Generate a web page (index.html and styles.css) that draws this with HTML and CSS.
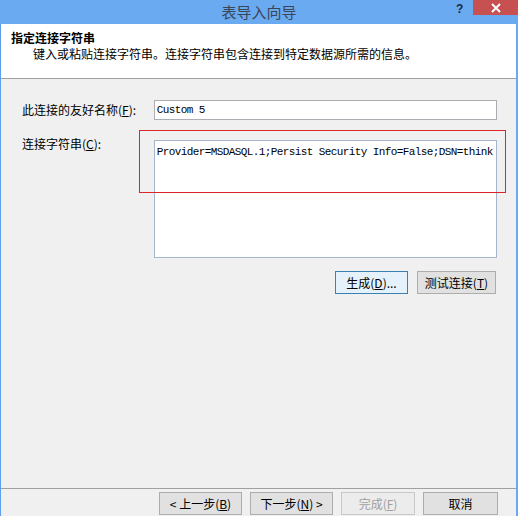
FILE: index.html
```html
<!DOCTYPE html>
<html lang="zh-CN">
<head>
<meta charset="utf-8">
<title>表导入向导</title>
<link rel="stylesheet" href="styles.css">
</head>
<body>
<div class="window">
  <div class="titlebar">
    <span class="title">表导入向导</span>
    <span class="help">?</span>
    <span class="close">
      <svg width="12" height="10" viewBox="0 0 12 10"><path d="M2 1 L10 9 M10 1 L2 9" stroke="#fff" stroke-width="2" fill="none"/></svg>
    </span>
  </div>
  <div class="header">
    <div class="h-title">指定连接字符串</div>
    <div class="h-sub">键入或粘贴连接字符串。连接字符串包含连接到特定数据源所需的信息。</div>
  </div>
  <div class="content">
    <div class="row">
      <div class="label">此连接的友好名称(<u>F</u>):</div>
      <div class="field input mono">Custom 5</div>
    </div>
    <div class="row row2">
      <div class="label">连接字符串(<u>C</u>):</div>
      <div class="field area mono">Provider=MSDASQL.1;Persist Security Info=False;DSN=think</div>
    </div>
    <div class="actions">
      <div class="btn focus">生成(<u>D</u>)...</div>
      <div class="btn wide">测试连接(<u>T</u>)</div>
    </div>
    <div class="highlight"></div>
  </div>
  <div class="footer">
    <div class="btn nav">&lt; 上一步(<u>B</u>)</div>
    <div class="btn nav">下一步(<u>N</u>) &gt;</div>
    <div class="btn small disabled">完成(<u>F</u>)</div>
    <div class="btn cancel">取消</div>
  </div>
</div>
</body>
</html>
```
FILE: styles.css
```css
* { box-sizing: border-box; }
html, body { margin: 0; padding: 0; }
body {
  width: 518px;
  height: 516px;
  overflow: hidden;
  font-family: "Noto Sans CJK SC", "Liberation Sans", sans-serif;
  font-size: 12px;
  color: #000;
  background: #f0f0f0;
}
.window {
  width: 518px;
  height: 516px;
  display: flex;
  flex-direction: column;
  border-left: 1px solid #5f9fe9;
  border-right: 2px solid #6aaaf0;
  position: relative;
}
.titlebar {
  height: 24px;
  background: #6aaaf0;
  position: relative;
  display: flex;
  justify-content: center;
  align-items: center;
  margin-left: -1px;
  margin-right: -2px;
}
.title {
  font-size: 15px;
  color: #3a4656;
  line-height: 24px;
}
.help {
  position: absolute;
  left: 456px;
  top: 1px;
  font-family: "Liberation Sans", sans-serif;
  font-weight: bold;
  font-size: 12px;
  color: #1d2a3a;
  line-height: 16px;
}
.close {
  position: absolute;
  right: 0;
  top: 0;
  width: 45px;
  height: 15px;
  background: #c75050;
  display: flex;
  justify-content: center;
  align-items: center;
}
.header {
  height: 55px;
  background: #fff;
  border-bottom: 1px solid #a0a0a0;
  padding: 6px 0 0 10px;
}
.h-title {
  font-weight: bold;
  line-height: 15px;
}
.h-sub {
  line-height: 15px;
  padding-left: 22px;
  margin-top: 1px;
}
.content {
  flex: 1;
  position: relative;
  padding: 21px 19px 0 21px;
  display: flex;
  flex-direction: column;
}
.row {
  display: flex;
  align-items: flex-start;
}
.row2 { margin-top: 20px; }
.label {
  width: 132px;
  line-height: 20px;
}
.row2 .label {
  line-height: 16px;
  margin-top: -4px;
}
.field {
  width: 344px;
  background: #fff;
}
.input {
  height: 20px;
  border: 1px solid #abadb3;
  padding: 0 2px;
  line-height: 18px;
}
.area {
  height: 118px;
  border: 1px solid #a4b7cc;
  padding: 4px 2px;
  line-height: 14px;
}
.mono {
  font-family: "Liberation Mono", monospace;
  font-size: 11px;
  letter-spacing: -0.6px;
  white-space: nowrap;
}
.actions {
  display: flex;
  justify-content: flex-end;
  gap: 9px;
  margin-top: 13px;
  padding-right: 1px;
}
.btn {
  height: 23px;
  border: 1px solid #adadad;
  background: #e1e1e1;
  display: flex;
  justify-content: center;
  align-items: center;
  line-height: 16px;
  white-space: nowrap;
}
.btn.focus {
  width: 73px;
  border-color: #3c7fb1;
  background: #e5f1fb;
}
.btn.wide { width: 79px; }
.highlight {
  position: absolute;
  left: 138px;
  top: 51px;
  width: 367px;
  height: 63px;
  border: 1px solid #d8262b;
}
.footer {
  height: 28px;
  border-top: 1px solid #a0a0a0;
  display: flex;
  justify-content: flex-end;
  gap: 8px;
  padding: 3px 18px 0 0;
}
.btn.nav { width: 83px; }
.btn.small { width: 74px; }
.btn.cancel { width: 75px; }
.btn.disabled {
  color: #a0a0a0;
  background: #ececec;
  border-color: #c8c8c8;
}
```
